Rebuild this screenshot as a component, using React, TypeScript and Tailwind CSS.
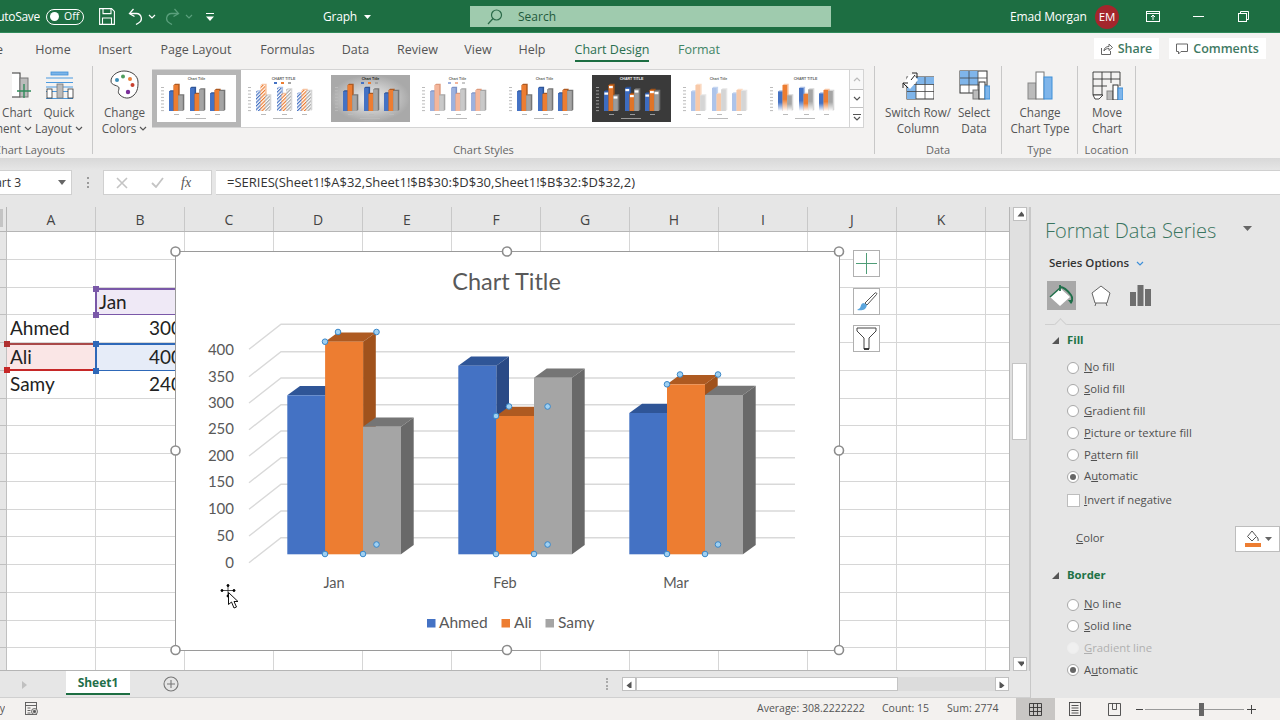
import React from "react";

const COLS = ["A", "B", "C", "D", "E", "F", "G", "H", "I", "J", "K", ""];
const ROWS = Array.from({ length: 16 }, (_, i) => i);

function Chev({ className = "" }: { className?: string }) {
  return (
    <svg width="8" height="5" viewBox="0 0 8 5" className={className} fill="none" stroke="currentColor" strokeWidth="1.2">
      <path d="M1 1l3 3 3-3" />
    </svg>
  );
}

function TitleBar() {
  return (
    <div className="h-[33px] shrink-0 pt-[1px] bg-[#1d6e42] border-b border-[#2f8a5a] flex items-center text-white text-[12px]">
      <div className="w-[40px] flex justify-end overflow-hidden whitespace-nowrap tracking-[-0.3px]">AutoSave</div>
      <div className="ml-[6px] w-[38px] h-[16px] rounded-full border border-white flex items-center pl-[3px] gap-[5px] text-[10.5px]">
        <span className="w-[9px] h-[9px] rounded-full bg-white" />
        <span>Off</span>
      </div>
      <svg className="ml-[15px]" width="16" height="17" viewBox="0 0 16 17" fill="none" stroke="#fff" strokeWidth="1.1">
        <path d="M.6.6h12l2.800 2.800v13H.6z" />
        <path d="M4 .6v5h8v-5M3.500 16.400V10h9v6.400" />
      </svg>
      <svg className="ml-[13px]" width="15" height="17" viewBox="0 0 15 17" fill="none" stroke="#fff" strokeWidth="1.3">
        <path d="M5.500 1 1.500 5.500l5 3" />
        <path d="M2 5.500h6.500a5 5 0 0 1 2 9.500L8 16.500" />
      </svg>
      <Chev className="ml-[5px] text-white" />
      <svg className="ml-[9px]" width="15" height="17" viewBox="0 0 15 17" fill="none" stroke="#5a9f7c" strokeWidth="1.3">
        <path d="M9.500 1l4 4.500-5 3" />
        <path d="M13 5.500H6.500a5 5 0 0 0-2 9.500L7 16.500" />
      </svg>
      <Chev className="ml-[5px] text-[#5a9f7c]" />
      <svg className="ml-[13px]" width="8" height="8" viewBox="0 0 8 8" fill="#fff">
        <path d="M0 0h8v1H0zM0 3.500h8L4 8z" />
      </svg>
      <div className="ml-[109px] w-[33px] whitespace-nowrap tracking-[-0.2px]">Graph</div>
      <svg className="ml-[8px]" width="7" height="4" viewBox="0 0 7 4" fill="#fff">
        <path d="M0 0h7L3.500 4z" />
      </svg>
      <div className="ml-[99px] w-[361px] h-[21px] bg-[#9fcbae] flex items-center text-[#1f5a3c] text-[12px]">
        <svg className="ml-[17px]" width="16" height="16" viewBox="0 0 16 16" fill="none" stroke="#2b6a49" strokeWidth="1.2">
          <circle cx="9.500" cy="6" r="5" />
          <path d="M6 9.500 1 15" />
        </svg>
        <span className="ml-[15px]">Search</span>
      </div>
      <div className="ml-[179px] w-[74px] whitespace-nowrap tracking-[-0.15px]">Emad Morgan</div>
      <div className="ml-[11px] w-[24px] h-[24px] rounded-full bg-[#a4262c] flex items-center justify-center text-[11.5px]">EM</div>
      <svg className="ml-[27px]" width="14" height="11" viewBox="0 0 14 11" fill="none" stroke="#fff" strokeWidth="1">
        <rect x=".5" y=".5" width="13" height="10" />
        <path d="M.5 2.500h13M7 9V4.500M5 6l2-2 2 2" />
      </svg>
      <div className="ml-[33px] w-[11px] h-px bg-white" />
      <svg className="ml-[34px]" width="11" height="11" viewBox="0 0 11 11" fill="none" stroke="#fff" strokeWidth="1">
        <rect x=".5" y="2.500" width="8" height="8" />
        <path d="M2.500 2.500v-2h8v8h-2" />
      </svg>
    </div>
  );
}

function Tab({ w, children, tone = "text-[#555555]" }: { w: string; children: React.ReactNode; tone?: string }) {
  return <div className={`${w} text-center whitespace-nowrap ${tone}`}>{children}</div>;
}

function TabsRow() {
  return (
    <div className="h-[33px] shrink-0 bg-[#f3f2f1] flex pt-[8px] text-[12.5px] leading-[18px]">
      <div className="w-[3px] flex justify-end overflow-hidden text-[#555555]">File</div>
      <div className="w-[23px]" />
      <Tab w="w-[54px]">Home</Tab>
      <Tab w="w-[70px]">Insert</Tab>
      <Tab w="w-[92px]">Page Layout</Tab>
      <Tab w="w-[91px]">Formulas</Tab>
      <Tab w="w-[45px]">Data</Tab>
      <Tab w="w-[79px]">Review</Tab>
      <Tab w="w-[42px]">View</Tab>
      <Tab w="w-[66px]">Help</Tab>
      <div className="w-[94px] flex justify-center">
        <span className="h-[21px] border-b-[2px] border-[#1d6e42] text-[#2a6f50] font-medium whitespace-nowrap">Chart Design</span>
      </div>
      <Tab w="w-[80px]" tone="text-[#3f8566]">Format</Tab>
      <div className="ml-auto mr-[14px] flex gap-[10px] -mt-[3px] h-[21px]">
        <div className="w-[65px] bg-white flex items-center justify-center gap-[5px] text-[#3f7a63] font-semibold">
          <svg width="12" height="12" viewBox="0 0 12 12" fill="none" stroke="#666" strokeWidth="1">
            <path d="M.5 5v6.500h9V8M3 8c0-3 2-4.500 5-4.500V1l3.500 3.500L8 7.500V5.500C6 5.500 4 6 3 8z" />
          </svg>
          <span>Share</span>
        </div>
        <div className="w-[97px] bg-white flex items-center justify-center gap-[5px] text-[#3f7a63] font-semibold">
          <svg width="12" height="12" viewBox="0 0 12 12" fill="none" stroke="#666" strokeWidth="1">
            <path d="M.5 1h11v7.500H5l-2.500 2.500V8.500h-2z" />
          </svg>
          <span>Comments</span>
        </div>
      </div>
    </div>
  );
}

type ThumbProps = {
  bg?: string;
  colors?: string[];
  tops?: string[];
  title?: string;
  titleFill?: string;
  id: string;
  pattern?: boolean;
  fade?: boolean;
  labels?: boolean;
  legend?: boolean;
  grad?: boolean;
};

const THUMB = [
  [19.5, 26, 15.6],
  [23, 17, 21.6],
  [17.5, 21, 20],
];

function Thumb({
  bg = "#ffffff",
  colors = ["#4472c4", "#ed7d31", "#a5a5a5"],
  tops = ["#2f5597", "#ae5a21", "#757575"],
  title = "Chart Title",
  titleFill = "#666666",
  id,
  pattern,
  fade,
  labels,
  legend,
  grad,
}: ThumbProps) {
  const xs = [12, 33, 53];
  const bw = 4.6;
  const fills = colors.map((c, i) => (pattern ? `url(#${id}p${i})` : fade ? `url(#${id}f${i})` : c));
  return (
    <svg width="79" height="47" viewBox="0 0 79 47" className="shrink-0 block">
      <defs>
        {colors.map((c, i) => (
          <pattern key={i} id={`${id}p${i}`} width="2.500" height="2.500" patternUnits="userSpaceOnUse" patternTransform="rotate(45)">
            <rect width="2.500" height="2.500" fill="#ffffff" />
            <rect width="1.200" height="2.500" fill={c} />
          </pattern>
        ))}
        {colors.map((c, i) => (
          <linearGradient key={i} id={`${id}f${i}`} x1="0" y1="0" x2="0" y2="1">
            <stop offset="0.55" stopColor={c} />
            <stop offset="1" stopColor="#ffffff" />
          </linearGradient>
        ))}
        <radialGradient id={`${id}bg`}>
          <stop offset="0" stopColor="#f2f2f2" />
          <stop offset="1" stopColor="#a9a9a9" />
        </radialGradient>
      </defs>
      <rect width="79" height="47" fill={grad ? `url(#${id}bg)` : bg} />
      <text x="39.500" y="5" fontSize="3.600" textAnchor="middle" fill={titleFill} fontFamily="Liberation Sans, sans-serif" fontWeight="700">
        {title}
      </text>
      {legend && (
        <g>
          <rect x="30" y="7" width="3" height="2" fill={colors[0]} />
          <rect x="37" y="7" width="3" height="2" fill={colors[1]} />
          <rect x="44" y="7" width="3" height="2" fill={colors[2]} />
        </g>
      )}
      {[0, 1, 2, 3, 4, 5, 6, 7].map((n) => (
        <rect key={n} x="4" y={12 + n * 3.300} width="3" height="1" fill={bg === "#3a3a3a" ? "#999999" : "#bbbbbb"} />
      ))}
      {xs.map((gx, g) =>
        THUMB[g].map((h, b) => {
          const x = gx + b * bw;
          const y = 36 - h;
          return (
            <g key={`${g}-${b}`}>
              <path d={`M${x} ${y}l1.500-1.200h${bw}v${h}l-1.500 1.200h${-bw}z`} fill={pattern || fade ? colors[b] : tops[b]} opacity={pattern || fade ? 0.45 : 1} />
              <rect x={x} y={y} width={bw} height={h} fill={fills[b]} />
              {labels && <rect x={x + 0.4} y={y + 1} width="3.800" height="2.200" fill="#ffffff" />}
            </g>
          );
        })
      )}
      {xs.map((gx) => (
        <rect key={gx} x={gx + 5} y="39" width="5" height="1" fill={bg === "#3a3a3a" ? "#999999" : "#bbbbbb"} />
      ))}
      <rect x="29" y="43" width="20" height="1" fill={bg === "#3a3a3a" ? "#999999" : "#bbbbbb"} />
    </svg>
  );
}

function BigBtn({ w, icon, lines, clip }: { w: string; icon: React.ReactNode; lines: React.ReactNode[]; clip?: boolean }) {
  return (
    <div className={`${w} shrink-0 flex flex-col ${clip ? "items-end overflow-hidden" : "items-center"}`}>
      <div className="h-[38px] flex items-end justify-center pb-[4px]">{icon}</div>
      {lines.map((l, i) => (
        <div key={i} className="h-[16px] leading-[16px] whitespace-nowrap text-[#555555]">
          {l}
        </div>
      ))}
    </div>
  );
}

function Group({ w, label, labelCls = "justify-center", children }: { w: string; label: string; labelCls?: string; children: React.ReactNode }) {
  return (
    <div className={`${w} h-[88px] shrink-0 flex flex-col border-r border-[#c8c8c8]`}>
      <div className="flex h-[76px] shrink-0">{children}</div>
      <div className={`h-[16px] shrink-0 leading-[16px] flex text-[11px] text-[#666666] whitespace-nowrap overflow-hidden ${labelCls}`}>{label}</div>
    </div>
  );
}

function Ribbon() {
  return (
    <div className="h-[92px] shrink-0 bg-[#f3f2f1] flex text-[11.7px]">
      <Group w="w-[93px]" label="Chart Layouts" labelCls="justify-end w-[65px]">
        <BigBtn
          w="w-[32px]"
          clip
          icon={
            <svg width="20" height="28" viewBox="0 0 20 28" fill="none">
              <rect x="-6" y="1" width="14" height="24" fill="#fff" stroke="#333" />
              <rect x="8" y="6" width="8" height="19" fill="#bbb" stroke="#777" />
              <path d="M12 12v14M5 19h14" stroke="#2f8a5a" strokeWidth="1.400" />
            </svg>
          }
          lines={["Add Chart", <span key="e">Element <Chev className="inline-block text-[#555] mb-[2px]" /></span>]}
        />
        <BigBtn
          w="w-[54px]"
          icon={
            <svg width="29" height="29" viewBox="0 0 29 29" fill="none">
              <rect x="6" y="1" width="17" height="3" fill="#7cb4e8" stroke="#3d8fd9" strokeWidth=".8" />
              <path d="M1 7h27M1 11.500h27M1 16h27M1 20.500h27M1 27.500h27" stroke="#4a9ae0" strokeWidth="1" />
              <rect x="2" y="18" width="5" height="9" fill="#fff" stroke="#333" strokeWidth=".8" />
              <rect x="12" y="13" width="6" height="14" fill="#bbb" stroke="#777" strokeWidth=".8" />
              <rect x="23" y="18" width="5" height="9" fill="#fff" stroke="#333" strokeWidth=".8" />
            </svg>
          }
          lines={["Quick", <span key="l">Layout <Chev className="inline-block text-[#555] mb-[2px]" /></span>]}
        />
      </Group>
      <Group w="w-[782px]" label="Chart Styles">
        <div className="w-[10px] shrink-0" />
        <BigBtn
          w="w-[43px]"
          icon={
            <svg width="29" height="30" viewBox="0 0 29 30" fill="none">
              <path d="M14 1C7 1 1 6 1 11c0 5 8 4 8 7 0 3-2 4 1 7 3 3 9 5 14 0 4-4 4-9 4-13C28 6 22 1 14 1z" fill="#fff" stroke="#444" strokeWidth="1" />
              <circle cx="7" cy="10" r="2" fill="#3a8fb7" />
              <circle cx="13" cy="6.500" r="2" fill="#4d9d5c" />
              <circle cx="20" cy="9" r="2" fill="#e8803a" />
              <circle cx="22.500" cy="15" r="2" fill="#c8402f" />
              <circle cx="18" cy="22" r="2.200" fill="#7a2f9a" />
            </svg>
          }
          lines={["Change", <span key="c">Colors <Chev className="inline-block text-[#555] mb-[2px]" /></span>]}
        />
        <div className="w-[6px] shrink-0" />
        <div className="w-[712px] h-[59px] mt-[3px] shrink-0 bg-white border border-[#d4d4d4] flex items-start pl-[4px] pt-[5px] gap-[8px] relative">
          <div className="outline-[5px] outline outline-[#b6b6b6]">
            <Thumb id="t1" />
          </div>
          <Thumb id="t2" pattern title="CHART TITLE" legend />
          <Thumb id="t3" grad title="Chart Title" titleFill="#222222" legend />
          <Thumb id="t4" colors={["#9db1de", "#f4b69b", "#c9c9c9"]} tops={["#7f93c6", "#dd9a7d", "#a5a5a5"]} legend />
          <Thumb id="t5" />
          <Thumb id="t6" bg="#3a3a3a" title="CHART TITLE" titleFill="#eeeeee" labels colors={["#3d6cc0", "#e07428", "#9b9b9b"]} tops={["#2c5190", "#9e5219", "#6f6f6f"]} />
          <Thumb id="t7" colors={["#aec4ea", "#f8c9a8", "#d5d5d5"]} tops={["#c6d6f0", "#fadcc6", "#e6e6e6"]} />
          <Thumb id="t8" fade title="CHART TITLE" />
          <div className="absolute right-0 top-0 bottom-0 w-[14px] flex flex-col border-l border-[#d4d4d4] text-[#555555] bg-[#f8f8f8]">
            <div className="h-[20px] flex items-center justify-center border-b border-[#c0c0c0]">
              <Chev className="rotate-180 text-[#bbbbbb]" />
            </div>
            <div className="h-[18px] flex items-center justify-center border-b border-[#c0c0c0] bg-white">
              <Chev />
            </div>
            <div className="flex-1 flex flex-col items-center justify-center gap-[1px] bg-white">
              <div className="w-[8px] h-px bg-[#555555]" />
              <Chev />
            </div>
          </div>
        </div>
      </Group>
      <Group w="w-[127px]" label="Data">
        <div className="w-[10px] shrink-0" />
        <BigBtn
          w="w-[66px]"
          icon={
            <svg width="32" height="28" viewBox="0 0 32 28" fill="none">
              <rect x="5" y="5" width="27" height="22" fill="#fff" stroke="#333" />
              <rect x="5" y="12.500" width="9" height="14.500" fill="#7fb5ea" />
              <rect x="14" y="5" width="18" height="7.500" fill="#7fb5ea" />
              <path d="M5 12.500h27M5 19.500h27M14 5v22M23 5v22" stroke="#444" strokeWidth=".8" />
              <path d="M2 11l6 6 8-9-4-5H7z" fill="#fff" />
              <path d="M1 11l5 5M1 11h5M1 11v5M9 8l4-5 M10 1h5v5" stroke="#222" strokeWidth="1" />
            </svg>
          }
          lines={["Switch Row/", "Column"]}
        />
        <BigBtn
          w="w-[46px]"
          icon={
            <svg width="31" height="30" viewBox="0 0 31 30" fill="none">
              <rect x="1" y="1" width="27" height="22" fill="#fff" stroke="#333" />
              <rect x="1" y="1" width="18" height="14" fill="#7fb5ea" />
              <path d="M1 8h27M1 15h27M10 1v22M19 1v22" stroke="#444" strokeWidth=".8" />
              <rect x="14" y="20" width="6" height="9" fill="#bbb" stroke="#777" />
              <rect x="20" y="12" width="6" height="17" fill="#fff" stroke="#333" />
              <rect x="26" y="16" width="5" height="13" fill="#7fb5ea" stroke="#3d8fd9" />
            </svg>
          }
          lines={["Select", "Data"]}
        />
      </Group>
      <Group w="w-[76px]" label="Type">
        <BigBtn
          w="w-[76px]"
          icon={
            <svg width="26" height="29" viewBox="0 0 26 29" fill="none">
              <rect x="1" y="12" width="8" height="16" fill="#bbb" stroke="#888" />
              <rect x="9" y="1" width="8" height="27" fill="#fff" stroke="#777" />
              <rect x="17" y="6" width="8" height="22" fill="#7fb5ea" stroke="#3d8fd9" />
            </svg>
          }
          lines={["Change", "Chart Type"]}
        />
      </Group>
      <Group w="w-[58px]" label="Location">
        <BigBtn
          w="w-[58px]"
          icon={
            <svg width="31" height="29" viewBox="0 0 31 29" fill="none">
              <path d="M1 1h27v14M1 1v23h9M1 8h27M1 15h14M10 1v23M19 1v11" stroke="#333" strokeWidth=".9" />
              <path d="M1 24l10 0-4 4H3z" fill="#fff" stroke="#333" strokeWidth=".9" />
              <rect x="15" y="20" width="6" height="9" fill="#bbb" stroke="#888" />
              <rect x="21" y="14" width="5" height="15" fill="#fff" stroke="#333" />
              <rect x="26" y="17" width="5" height="12" fill="#7fb5ea" stroke="#3d8fd9" />
            </svg>
          }
          lines={["Move", "Chart"]}
        />
      </Group>
    </div>
  );
}

function FormulaBar() {
  return (
    <div className="h-[25px] shrink-0 flex bg-[#e6e6e6] text-[12px] text-[#333333]">
      <div className="w-[72px] bg-white border-y border-r border-[#d0d0d0] flex items-center overflow-hidden">
        <div className="w-[21px] flex justify-end overflow-hidden whitespace-nowrap">Chart 3</div>
        <svg className="ml-[37px]" width="8" height="5" viewBox="0 0 8 5" fill="#666">
          <path d="M0 0h8L4 5z" />
        </svg>
      </div>
      <div className="w-[31px] flex items-center justify-center">
        <div className="w-[2px] h-[11px] border-l-2 border-dotted border-[#9a9a9a]" />
      </div>
      <div className="w-[109px] bg-white border border-[#d0d0d0] flex items-center">
        <svg className="ml-[12px]" width="12" height="12" viewBox="0 0 12 12" stroke="#c4c4c4" strokeWidth="1.600" fill="none">
          <path d="M1 1l10 10M11 1 1 11" />
        </svg>
        <svg className="ml-[23px]" width="13" height="11" viewBox="0 0 13 11" stroke="#c4c4c4" strokeWidth="1.800" fill="none">
          <path d="M1 6l4 4 7-9" />
        </svg>
        <span className="ml-[17px] font-['Liberation_Serif',serif] italic text-[14px] text-[#555555]">fx</span>
      </div>
      <div className="w-[4px]" />
      <div className="flex-1 bg-white border-y border-[#d0d0d0] flex items-center pl-[11px] whitespace-nowrap text-[13px]">
        =SERIES(Sheet1!$A$32,Sheet1!$B$30:$D$30,Sheet1!$B$32:$D$32,2)
      </div>
    </div>
  );
}

function Corner({ className }: { className: string }) {
  return <span className={`absolute w-[6px] h-[6px] z-10 ${className}`} />;
}

function Cell({ r, c }: { r: number; c: number }) {
  const base = "w-[89px] shrink-0 h-full border-r border-b border-[#d6d6d6] relative flex items-center whitespace-nowrap overflow-visible";
  if (r === 2 && c === 1)
    return (
      <div className={`${base} bg-[#efe9f6] border-y-2 border-y-[#7a58a8] pl-[3px]`}>
        <span className="absolute left-[-1px] top-0 bottom-0 w-[2px] bg-[#7a58a8]" />
        <Corner className="bg-[#7a58a8] -left-[3px] -top-[4px]" />
        <Corner className="bg-[#7a58a8] -left-[3px] -bottom-[4px]" />
        Jan
      </div>
    );
  if (r === 3 && c === 0) return <div className={`${base} pl-[3px]`}>Ahmed</div>;
  if (r === 3 && c === 1) return <div className={`${base} justify-end pr-[2px]`}>300</div>;
  if (r === 4 && c === 0)
    return (
      <div className={`${base} bg-[#fae6e6] border-t-2 border-t-[#a94a4a] border-b-2 border-b-[#c62828] pl-[3px]`}>
        <Corner className="bg-[#b03030] -left-[3px] -top-[4px] w-[4px]" />
        <Corner className="bg-[#c62828] -left-[3px] -bottom-[4px] w-[4px]" />
        Ali
      </div>
    );
  if (r === 4 && c === 1)
    return (
      <div className={`${base} bg-[#e6ecf8] border-y-2 border-y-[#2e68b8] justify-end pr-[2px]`}>
        <span className="absolute left-[-1px] top-0 bottom-0 w-[2px] bg-[#2e68b8]" />
        <Corner className="bg-[#2e68b8] -left-[3px] -top-[4px]" />
        <Corner className="bg-[#2e68b8] -left-[3px] -bottom-[4px]" />
        400
      </div>
    );
  if (r === 5 && c === 0) return <div className={`${base} pl-[3px]`}>Samy</div>;
  if (r === 5 && c === 1) return <div className={`${base} justify-end pr-[2px]`}>240</div>;
  return <div className={base} />;
}

type Bar = { x: number; top: number; i: number };
const BOTTOM = 554.3;
const DX = 12.7;
const DY = 9.3;
const W = 38;
const FRONT = ["#4472c4", "#ed7d31", "#a5a5a5"];
const TOP = ["#2f5597", "#ae5a21", "#757575"];
const SIDE = ["#2a4a86", "#a0521c", "#696969"];
const BARS: Bar[] = [
  { x: 287.3, top: 395.3, i: 0 },
  { x: 325.1, top: 341.7, i: 1 },
  { x: 363, top: 426.7, i: 2 },
  { x: 458.3, top: 365.7, i: 0 },
  { x: 496.1, top: 416, i: 1 },
  { x: 534, top: 377.7, i: 2 },
  { x: 629.3, top: 413, i: 0 },
  { x: 667, top: 384.3, i: 1 },
  { x: 705, top: 395, i: 2 },
];
const GRIDY = [324.3, 351.7, 378, 404.7, 431, 457.7, 484.3, 511, 537.7];
const AXIS: [string, number][] = [
  ["400", 349],
  ["350", 376],
  ["300", 402.5],
  ["250", 428.5],
  ["200", 455],
  ["150", 481.5],
  ["100", 508],
  ["50", 535],
  ["0", 562],
];
const DOTS: [number, number][] = [
  [325, 341.7], [338, 332], [376.500, 332], [325, 554], [363, 554], [376.500, 544.500],
  [496, 416], [509, 406.500], [547.600, 406.500], [496, 554], [534, 554], [547.600, 544.500],
  [667, 384.300], [680, 374.500], [718, 374.500], [667, 554], [705, 554], [718, 544.500],
];
const HANDLES: [number, number][] = [
  [175.500, 251.500], [507, 251.500], [839, 251.500], [175.500, 450.500], [839, 450.500], [175.500, 650], [507, 650], [839, 650],
];

function Chart() {
  return (
    <div className="absolute left-[175px] top-[44px] w-[665px] h-[400px] bg-white border border-[#9a9a9a]">
      <svg width="665" height="400" viewBox="175 251 665 400" className="overflow-visible block -m-px">
        <text x="506.500" y="290" textAnchor="middle" fontSize="23.500" fill="#595959" fontFamily="Lato, sans-serif">
          Chart Title
        </text>
        {GRIDY.map((y) => (
          <g key={y} stroke="#d9d9d9" strokeWidth="1.400" fill="none">
            <path d={`M795 ${y}H281L249 ${y + 25}`} />
          </g>
        ))}
        {AXIS.map(([t, y]) => (
          <text key={t} x="234" y={y + 5.500} textAnchor="end" fontSize="15" fill="#595959" fontFamily="Lato, sans-serif">
            {t}
          </text>
        ))}
        {BARS.map((b, k) => (
          <g key={k}>
            <path d={`M${b.x} ${b.top}l${DX} ${-DY}h${W}l${-DX} ${DY}z`} fill={TOP[b.i]} />
            <path d={`M${b.x + W} ${b.top}l${DX} ${-DY}V${BOTTOM - DY}l${-DX} ${DY}z`} fill={SIDE[b.i]} />
            <rect x={b.x} y={b.top} width={W} height={BOTTOM - b.top} fill={FRONT[b.i]} />
          </g>
        ))}
        {DOTS.map(([x, y], i) => (
          <circle key={i} cx={x} cy={y} r="2.800" fill="#9fd0f2" stroke="#3a87c8" strokeWidth="1" />
        ))}
        {[["Jan", 334], ["Feb", 505], ["Mar", 676]].map(([t, x]) => (
          <text key={t as string} x={x as number} y="588" textAnchor="middle" fontSize="14.500" fill="#595959" fontFamily="Lato, sans-serif">
            {t}
          </text>
        ))}
        <rect x="427" y="619" width="8.500" height="8.500" fill="#4472c4" />
        <text x="439" y="628" fontSize="15.500" fill="#595959" fontFamily="Lato, sans-serif">Ahmed</text>
        <rect x="501.500" y="619" width="8.500" height="8.500" fill="#ed7d31" />
        <text x="514" y="628" fontSize="15.500" fill="#595959" fontFamily="Lato, sans-serif">Ali</text>
        <rect x="545.500" y="619" width="8.500" height="8.500" fill="#a5a5a5" />
        <text x="558" y="628" fontSize="15.500" fill="#595959" fontFamily="Lato, sans-serif">Samy</text>
        <g fill="#000" stroke="#000" strokeWidth="1">
          <path d="M228 585v11M222 590.500h12" fill="none" stroke="#222" strokeWidth=".8" />
          <circle cx="228" cy="585.500" r="1" />
          <circle cx="228" cy="596" r="1" />
          <circle cx="222" cy="590.500" r="1" />
          <circle cx="234" cy="590.500" r="1" />
        </g>
        <path d="M228.500 592.500v12l3-2.500 2.500 6 2.500-1-2.500-5.500h4z" fill="#fff" stroke="#111" strokeWidth="1" />
        {HANDLES.map(([x, y], i) => (
          <circle key={i} cx={x} cy={y} r="4.500" fill="#fff" stroke="#8c8c8c" strokeWidth="1.600" />
        ))}
      </svg>
    </div>
  );
}

function ChartBtn({ children, top }: { children: React.ReactNode; top: string }) {
  return (
    <div className={`absolute left-[853px] ${top} w-[27px] h-[27px] bg-white border border-[#b0b0b0] flex items-center justify-center`}>
      {children}
    </div>
  );
}

function Sheet() {
  return (
    <div className="w-[1010px] shrink-0 relative overflow-hidden bg-white border-r border-b border-[#b5b5b5] font-['Lato',sans-serif] text-[19px] text-[#222222]">
      <div className="h-[25px] flex bg-[#e6e6e6] border-b border-[#b5b5b5] font-['Open_Sans',sans-serif] text-[14px] text-[#444444]">
        <div className="w-[7px] shrink-0 border-r border-[#b5b5b5] relative">
          <span className="absolute left-0 top-[2px] w-[3px] h-[18px] bg-[#c4c4c4]" />
        </div>
        {COLS.map((c, i) => (
          <div key={i} className="w-[89px] shrink-0 border-r border-[#c8c8c8] flex items-center justify-center">
            {c}
          </div>
        ))}
      </div>
      {ROWS.map((r) => (
        <div key={r} className="h-[27.750px] flex">
          <div className="w-[7px] shrink-0 bg-[#e6e6e6] border-r border-b border-[#c0c0c0]" />
          {COLS.map((_, c) => (
            <Cell key={c} r={r} c={c} />
          ))}
        </div>
      ))}
      <Chart />
      <ChartBtn top="top-[43px]">
        <svg width="21" height="21" viewBox="0 0 21 21" stroke="#4f9d77" strokeWidth="1" fill="none">
          <path d="M10.500 0v21M0 10.500h21" />
        </svg>
      </ChartBtn>
      <ChartBtn top="top-[81px]">
        <svg width="22" height="22" viewBox="0 0 22 22" fill="none">
          <path d="M9 12 19 2c1-1 2.500.5 1.500 1.500L11 14z" fill="#fff" stroke="#555" strokeWidth="1" />
          <path d="M8 12c-3 0-3 3-4 5l-3 2c5 1 9 0 10-5z" fill="#5aa5dd" />
        </svg>
      </ChartBtn>
      <ChartBtn top="top-[118px]">
        <svg width="21" height="23" viewBox="0 0 21 23" fill="none" stroke="#444" strokeWidth="1">
          <path d="M1 1h19v3l-7 7v11H8V11L1 4z" />
          <path d="M8 22h5" stroke="#111" strokeWidth="1.400" />
        </svg>
      </ChartBtn>
    </div>
  );
}

function ScrollBtn({ dir }: { dir: "up" | "down" | "left" | "right" }) {
  const d = { up: "M0 5 4 0l4 5z", down: "M0 0h8L4 5z", left: "M5 0v8L0 4z", right: "M0 0v8l5-4z" }[dir];
  return (
    <div className="w-[14px] h-[14px] shrink-0 bg-white border border-[#c0c0c0] flex items-center justify-center">
      <svg width="8" height="8" viewBox="0 0 8 8" fill="#555">
        <path d={d} transform="translate(1.500 1.500)" />
      </svg>
    </div>
  );
}

function VScroll() {
  return (
    <div className="w-[20px] shrink-0 flex flex-col items-center bg-[#e0e0e0] border-r border-[#c8c8c8]">
      <ScrollBtn dir="up" />
      <div className="mt-[142px] w-[15px] h-[77px] bg-white border border-[#c4c4c4]" />
      <div className="mt-auto" />
      <ScrollBtn dir="down" />
    </div>
  );
}

function TabBar() {
  return (
    <div className="h-[27px] shrink-0 flex items-start bg-[#e6e6e6] border-b border-[#d0d0d0]">
      <svg className="ml-[22px] mt-[10px]" width="5" height="8" viewBox="0 0 5 8" fill="#c0c0c0">
        <path d="M0 0v8l5-4z" />
      </svg>
      <div className="ml-[39px] w-[64px] h-[24px] pt-[2px] bg-white border-b-2 border-[#1d6e42] text-[#1f6f4a] font-bold text-[12px] flex items-center justify-center">
        Sheet1
      </div>
      <svg className="ml-[33px] mt-[5px]" width="16" height="16" viewBox="0 0 16 16" fill="none" stroke="#777" strokeWidth="1.100">
        <circle cx="8" cy="8" r="7" />
        <path d="M8 4v8M4 8h8" />
      </svg>
      <div className="ml-[427px] mt-[7px] w-[2px] h-[12px] border-l-2 border-dotted border-[#aaaaaa]" />
      <div className="ml-[14px] mt-[6px] flex">
        <ScrollBtn dir="left" />
        <div className="w-[262px] h-[14px] bg-white border border-[#c4c4c4]" />
        <div className="w-[97px] h-[14px] bg-[#dcdcdc]" />
        <ScrollBtn dir="right" />
      </div>
    </div>
  );
}

function Radio({ checked, disabled, children }: { checked?: boolean; disabled?: boolean; children: React.ReactNode }) {
  return (
    <div className={`h-[21.800px] flex items-center pl-[36px] ${disabled ? "text-[#b0b0b0]" : "text-[#505050]"}`}>
      <span className={`w-[12px] h-[12px] rounded-full border ${disabled ? "border-[#eeeeee] bg-[#f0f0f0]" : "border-[#a8a8a8] bg-white"} flex items-center justify-center`}>
        {checked && <span className="w-[6px] h-[6px] rounded-full bg-[#666666]" />}
      </span>
      <span className="ml-[5px] whitespace-nowrap">{children}</span>
    </div>
  );
}

function Caret() {
  return (
    <svg className="ml-[21px]" width="7" height="7" viewBox="0 0 7 7" fill="#555">
      <path d="M7 0v7H0z" />
    </svg>
  );
}

function Pane() {
  return (
    <div className="flex-1 border-l border-[#c8c8c8] bg-[#e6e6e6] text-[11.300px] overflow-hidden">
      <div className="mt-[10px] h-[28px] pl-[14px] flex items-center">
        <span className="text-[20px] font-light text-[#3a7560] whitespace-nowrap">Format Data Series</span>
        <svg className="ml-[27px] -mt-[6px]" width="9" height="5" viewBox="0 0 9 5" fill="#666">
          <path d="M0 0h9L4.500 5z" />
        </svg>
      </div>
      <div className="mt-[8px] h-[20px] pl-[18px] flex items-center font-semibold text-[#333333] text-[11.500px]">
        <span>Series Options</span>
        <Chev className="ml-[7px] text-[#3d8fd9]" />
      </div>
      <div className="mt-[8px] h-[29px] pl-[16px] flex items-center">
        <div className="w-[29px] h-[29px] bg-[#a8a8a8] flex items-center justify-center">
          <svg width="27" height="24" viewBox="0 0 27 24" fill="none">
            <path d="M12 4 2 13l10 9 10-9z" fill="#fff" />
            <path d="M2 13l10-9" stroke="#1f6f4a" strokeWidth="1.500" />
            <path d="M12 1v6" stroke="#1f6f4a" strokeWidth="1.800" />
            <path d="M12 3c4 0 8 4 11 8 2 3 1 6 0 8" stroke="#1f6f4a" strokeWidth="1.800" />
            <path d="M20 16l3 4 2-4z" fill="#1f6f4a" />
          </svg>
        </div>
        <svg className="ml-[15px]" width="20" height="22" viewBox="0 0 20 22" fill="none" stroke="#666" strokeWidth="1">
          <path d="M10 1l9 7-3 10H4L1 8z" fill="#fff" />
          <path d="M4 21l1-3M16 21l-1-3" />
        </svg>
        <svg className="ml-[19px]" width="21" height="21" viewBox="0 0 21 21" fill="#6e6e6e">
          <path d="M0 7h6v14H0zM7.500 0h6v21h-6zM15 4h6v17h-6z" />
        </svg>
      </div>
      <div className="mt-[14px] h-0 border-t border-[#cfcfcf] ml-[14px] relative">
        <span className="absolute left-[11px] -top-[5px] w-[9px] h-[9px] rotate-45 bg-[#e6e6e6] border-l border-t border-[#cfcfcf]" />
      </div>
      <div className="mt-[6px] h-[18px] flex items-center font-bold text-[#217346]">
        <Caret />
        <span className="ml-[8px]">Fill</span>
      </div>
      <div className="mt-[8px]">
        <Radio><u>N</u>o fill</Radio>
        <Radio><u>S</u>olid fill</Radio>
        <Radio><u>G</u>radient fill</Radio>
        <Radio><u>P</u>icture or texture fill</Radio>
        <Radio>P<u>a</u>ttern fill</Radio>
        <Radio checked>A<u>u</u>tomatic</Radio>
      </div>
      <div className="mt-[2px] h-[22px] pl-[36px] flex items-center text-[#505050]">
        <span className="w-[13px] h-[13px] bg-white border border-[#bdbdbd]" />
        <span className="ml-[4px]"><u>I</u>nvert if negative</span>
      </div>
      <div className="mt-[14px] h-[26px] pl-[45px] flex items-center text-[#505050]">
        <span><u>C</u>olor</span>
        <div className="ml-auto w-[45px] h-[26px] bg-white border border-[#bdbdbd] flex items-center pl-[9px]">
          <svg width="16" height="18" viewBox="0 0 16 18" fill="none">
            <path d="M7 1 2.500 6.500 7 11l4.500-4.500z" fill="#fff" stroke="#555" />
            <path d="M12 7c1 1.500 1.500 2.500 1 4" stroke="#555" />
            <rect x="0" y="13" width="16" height="4" fill="#ed7d31" />
          </svg>
          <svg className="ml-[4px]" width="7" height="4" viewBox="0 0 7 4" fill="#666">
            <path d="M0 0h7L3.500 4z" />
          </svg>
        </div>
      </div>
      <div className="mt-[15px] h-[18px] flex items-center font-bold text-[#217346]">
        <Caret />
        <span className="ml-[8px]">Border</span>
      </div>
      <div className="mt-[9px]">
        <Radio><u>N</u>o line</Radio>
        <Radio><u>S</u>olid line</Radio>
        <Radio disabled><u>G</u>radient line</Radio>
        <Radio checked>A<u>u</u>tomatic</Radio>
      </div>
    </div>
  );
}

function StatusBar() {
  return (
    <div className="h-[22px] shrink-0 bg-[#f3f1ef] flex items-center text-[10.500px] text-[#555555]">
      <div className="w-[5px] flex justify-end overflow-hidden">Ready</div>
      <svg className="ml-[20px]" width="14" height="14" viewBox="0 0 14 14" fill="none" stroke="#555" strokeWidth=".9">
        <rect x=".5" y=".5" width="11" height="12" />
        <path d="M.5 3.500h11M2.500 6h3M2.500 8.500h3M2.500 11h3" />
        <circle cx="9.500" cy="9.500" r="3" fill="#f3f1ef" />
        <circle cx="9.500" cy="9.500" r="1.200" fill="#555" />
      </svg>
      <span className="ml-[718px] w-[108px] whitespace-nowrap">Average: 308.2222222</span>
      <span className="ml-[17px] w-[49px] whitespace-nowrap">Count: 15</span>
      <span className="ml-[16px] w-[51px] whitespace-nowrap">Sum: 2774</span>
      <div className="ml-[18px] w-[39px] h-[22px] bg-[#c8c6c4] flex items-center justify-center">
        <svg width="13" height="13" viewBox="0 0 13 13" fill="none" stroke="#333" strokeWidth=".9">
          <path d="M.5.500h12v12H.5zM.5 4.500h12M.5 8.500h12M4.500.500v12M8.500.500v12" />
        </svg>
      </div>
      <svg className="ml-[14px]" width="12" height="14" viewBox="0 0 12 14" fill="none" stroke="#444" strokeWidth=".9">
        <rect x=".5" y=".5" width="11" height="13" />
        <path d="M2.500 3.500h7M2.500 6h7M2.500 8.500h7M2.500 11h7" />
      </svg>
      <svg className="ml-[27px]" width="13" height="13" viewBox="0 0 13 13" fill="none" stroke="#444" strokeWidth=".9">
        <path d="M.5.500h12v12H.5zM4.500.500v6h4v-6" />
      </svg>
      <div className="ml-[15px] w-[7px] h-px bg-[#444444]" />
      <div className="ml-[2px] w-[99px] h-px bg-[#9a9a9a] relative">
        <span className="absolute left-[54px] -top-[6px] w-[5px] h-[13px] bg-[#666666]" />
      </div>
      <svg className="ml-[3px]" width="9" height="9" viewBox="0 0 9 9" stroke="#444" strokeWidth="1">
        <path d="M4.500 0v9M0 4.500h9" />
      </svg>
    </div>
  );
}

export default function App() {
  return (
    <div className="w-[1280px] h-[720px] overflow-hidden flex flex-col bg-[#e6e6e6] font-['Open_Sans',sans-serif]">
      <TitleBar />
      <TabsRow />
      <Ribbon />
      <div className="h-[12px] shrink-0 bg-gradient-to-b from-[#d8d8d8] to-[#e6e6e6]" />
      <FormulaBar />
      <div className="h-[12px] shrink-0" />
      <div className="flex flex-1 min-h-0">
        <div className="w-[1030px] shrink-0 flex flex-col">
          <div className="flex h-[464px] shrink-0">
            <Sheet />
            <VScroll />
          </div>
          <TabBar />
        </div>
        <Pane />
      </div>
      <StatusBar />
    </div>
  );
}
